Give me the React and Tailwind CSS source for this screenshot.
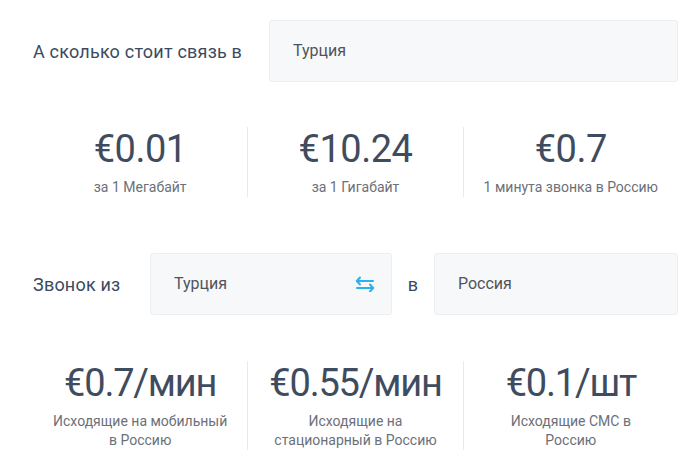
import React from "react";

const font = { fontFamily: "Roboto, 'Noto Sans', sans-serif" };

function Stat({ price, label, last, tight }) {
  return (
    <div className={`flex flex-1 flex-col items-center text-center ${last ? "" : "border-r border-[#e6ebf0]"}`}>
      <div className={`text-[38px] leading-[44px] font-normal text-[#3f4c60] ${tight ? "tracking-[-1.2px]" : "tracking-[-0.5px]"}`}>{price}</div>
      <div className="mt-[7px] text-[14px] leading-[19px] text-[#6b7079]">{label}</div>
    </div>
  );
}

function Field({ value, icon, className }) {
  return (
    <div className={`flex h-[62px] items-center justify-between rounded-[3px] border border-[#eceef1] bg-[#f7f8f9] pl-[23px] pr-[16px] ${className}`}>
      <span className="text-[16px] text-[#50545a]">{value}</span>
      {icon}
    </div>
  );
}

function Swap() {
  return (
    <svg width="20" height="16" viewBox="0 0 20 16" fill="none" stroke="#2bb1ec" strokeWidth="2" strokeLinecap="round" strokeLinejoin="round">
      <path d="M2 5h16" />
      <path d="M5 1.5L1.8 5 5 8.5" />
      <path d="M2 12h16" />
      <path d="M15 8.5l3.2 3.5-3.2 3.5" />
    </svg>
  );
}

export default function App() {
  return (
    <div className="h-[463px] w-[700px] bg-white pl-[33px] pr-[22px]" style={font}>
      <div className="flex items-center pt-[20px]">
        <div className="w-[236px] text-[18px] tracking-[0.2px] font-normal text-[#3b4a60]">А сколько стоит связь в</div>
        <Field value="Турция" className="flex-1" />
      </div>

      <div className="mt-[45px] flex h-[74px] items-start">
        <Stat price="€0.01" label="за 1 Мегабайт" />
        <Stat price="€10.24" label="за 1 Гигабайт" />
        <Stat price="€0.7" label="1 минута звонка в Россию" last />
      </div>

      <div className="mt-[52px] flex items-center">
        <div className="w-[117px] text-[18px] tracking-[0.2px] font-normal text-[#3b4a60]">Звонок из</div>
        <Field value="Турция" icon={<Swap />} className="w-[242px]" />
        <div className="w-[42px] text-center text-[18px] font-normal text-[#3b4a60]">в</div>
        <Field value="Россия" className="flex-1" />
      </div>

      <div className="mt-[46px] flex h-[86px] items-start">
        <Stat tight price="€0.7/мин" label={<>Исходящие на мобильный<br />в Россию</>} />
        <Stat tight price="€0.55/мин" label={<>Исходящие на<br />стационарный в Россию</>} />
        <Stat tight price="€0.1/шт" label={<>Исходящие СМС в<br />Россию</>} last />
      </div>
    </div>
  );
}
